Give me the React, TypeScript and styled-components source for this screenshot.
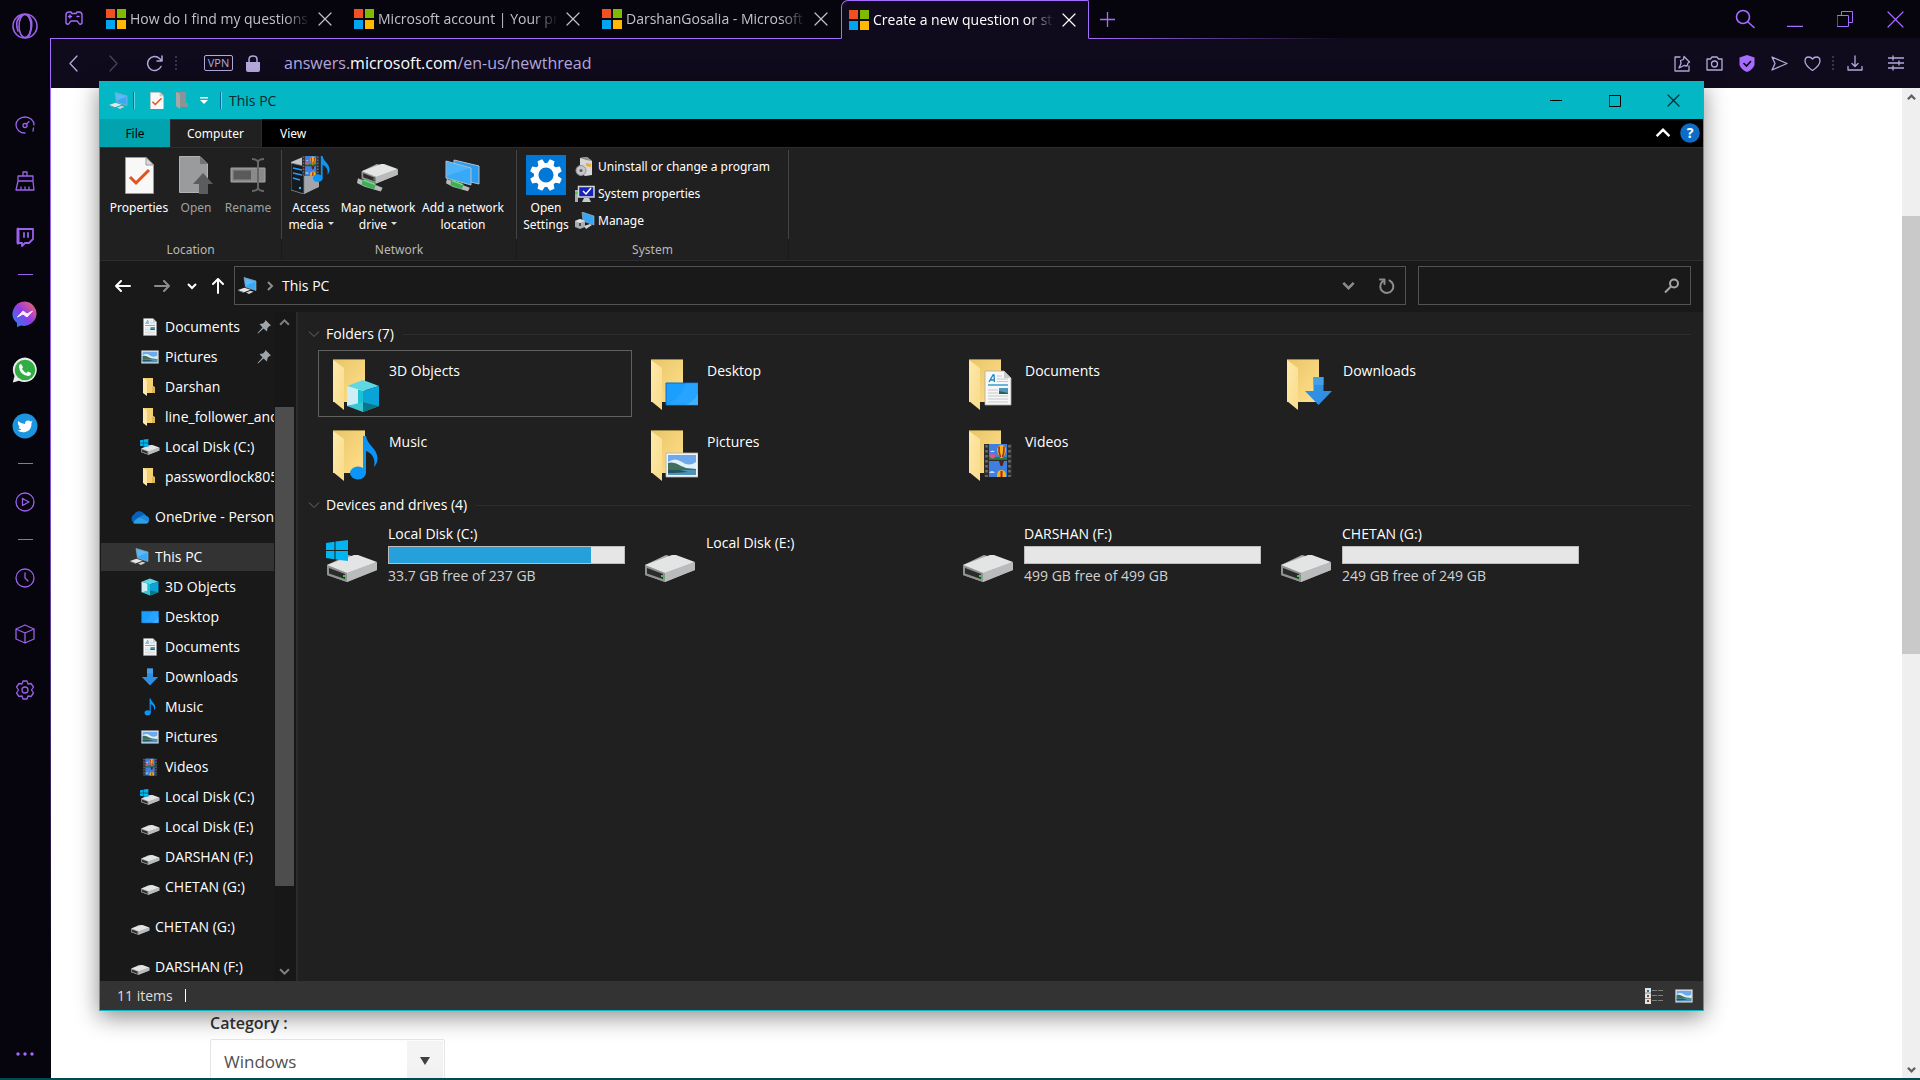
import React from "react";
import styled, { createGlobalStyle, css } from "styled-components";

const GlobalStyle = createGlobalStyle`
  * { box-sizing: border-box; }
  html, body { margin: 0; padding: 0; }
  body {
    background: #004b50;
    font-family: "Open Sans", "Noto Sans", sans-serif;
    font-size: 14px;
    overflow: hidden;
  }
  button, input, select { font: inherit; color: inherit; border: 0; padding: 0; margin: 0; background: none; }
  svg { display: block; flex: none; }
`;

/* ---------- browser ---------- */

const Browser = styled.div`
  position: relative;
  display: flex;
  height: 100vh;
  border-bottom: 2px solid #004b50;
  background: #06040d;
`;

const Sidebar = styled.nav`
  width: 50px;
  flex: none;
  display: flex;
  flex-direction: column;
  align-items: center;
  padding: 12px 0 10px;
  color: #9a61ea;
`;

const SideButton = styled.button<{ $top?: number }>`
  display: grid;
  place-items: center;
  width: 32px;
  height: 28px;
  flex: none;
  margin-top: ${(p) => p.$top ?? 28}px;
`;

const SideRule = styled.hr`
  width: 15px;
  height: 1px;
  flex: none;
  margin: 23px 0 0;
  border: 0;
  background: #9a61ea;
`;

const Spacer = styled.div`
  flex: 1;
`;

const BrowserMain = styled.div`
  flex: 1;
  min-width: 0;
  display: flex;
  flex-direction: column;
`;

const TabBar = styled.header`
  position: relative;
  z-index: 1;
  display: flex;
  height: 38px;
  flex: none;
  color: #a66bff;
`;

const TabMenuCell = styled.div`
  display: grid;
  margin-bottom: -1px;
  border-bottom: 1px solid #a66bff;
`;

const TabMenu = styled.button`
  width: 48px;
  display: grid;
  place-items: center;
`;

const BrowserTab = styled.div<{ $active?: boolean }>`
  width: 248px;
  display: flex;
  align-items: center;
  gap: 4px;
  padding: 0 10px 0 8px;
  color: ${(p) => (p.$active ? "#ffffff" : "#c3c2c6")};
  border-bottom: 1px solid #a66bff;
  margin-bottom: -1px;
  ${(p) =>
    p.$active &&
    css`
      margin-left: -1px;
      background: #0f0b1c;
      border: 1px solid #a66bff;
      border-bottom-color: #0f0b1c;
      border-top-left-radius: 7px;
      border-top-right-radius: 2px;
      padding-left: 7px;
      padding-right: 8px;
    `}
`;

const TabTitle = styled.button`
  flex: 1;
  min-width: 0;
  overflow: hidden;
  white-space: nowrap;
  text-align: left;
  font-size: 14px;
  line-height: 24px;
  mask-image: linear-gradient(to right, #000 86%, transparent 100%);
`;

const TabClose = styled.button`
  width: 22px;
  height: 24px;
  display: grid;
  place-items: center;
`;

const TabRest = styled.div`
  flex: 1;
  display: flex;
  align-items: center;
  padding-left: 11px;
  margin-bottom: -1px;
  border-bottom: 1px solid transparent;
  border-image: linear-gradient(to right, #a66bff 0, #0f0b1c 30%) 1;
`;

const WindowButton = styled.button`
  width: 50px;
  height: 36px;
  display: grid;
  place-items: center;
`;

const PlainButton = styled.button`
  display: grid;
  place-items: center;
`;

const Frame = styled.div`
  flex: 1;
  min-height: 0;
  display: flex;
  flex-direction: column;
  border-left: 1px solid;
  border-image: linear-gradient(to bottom, #a66bff 0, #8a55dd 40%, #06040d 90%) 1;
`;

const Toolbar = styled.div`
  display: flex;
  align-items: center;
  height: 50px;
  flex: none;
  padding: 0 1px 0 5px;
  background: #0f0b1c;
  color: #b5a8dc;
`;

const ToolButton = styled.button<{ $w: number; $dim?: boolean }>`
  width: ${(p) => p.$w}px;
  height: 32px;
  flex: none;
  display: grid;
  place-items: center;
  opacity: ${(p) => (p.$dim ? 0.35 : 1)};
`;

const DotRule = styled.span`
  width: 2px;
  height: 14px;
  flex: none;
  border-left: 2px dotted #3a3452;
`;

const VpnBadge = styled.button`
  width: 29px;
  height: 16px;
  margin: 0 13px 0 24px;
  border: 1px solid #b5a8dc;
  border-radius: 2px;
  font-size: 11px;
  line-height: 14px;
`;

const Address = styled.button`
  flex: 1;
  text-align: left;
  margin-left: 24px;
  font-size: 16px;
  line-height: 24px;
  b { font-weight: 400; color: #ffffff; }
`;

const Page = styled.main`
  flex: 1;
  min-height: 0;
  display: flex;
  background: #ffffff;
`;

const PageBody = styled.form`
  flex: 1;
  min-height: 0;
  overflow: hidden;
  display: flex;
  flex-direction: column;
  justify-content: flex-end;
  align-items: flex-start;
  padding-left: 159px;
`;

const FieldLabel = styled.label`
  color: #333333;
  font-size: 16px;
  line-height: 24px;
  font-weight: 600;
  margin-bottom: 4px;
`;

const SelectBox = styled.div`
  display: grid;
  grid-template-columns: 1fr 36px;
  width: 235px;
  height: 44px;
  flex: none;
  margin-bottom: -5px;
  padding: 1px;
  border: 1px solid #e6e6e6;
  border-radius: 2px;
  color: #505050;
`;

const CategorySelect = styled.select`
  grid-area: 1 / 1 / 2 / 3;
  appearance: none;
  padding-left: 12px;
  font-size: 17px;
`;

const SelectArrow = styled.span`
  grid-area: 1 / 2 / 2 / 3;
  display: grid;
  place-items: center;
  background: linear-gradient(#f4f4f4 0 42%, #efefef);
  pointer-events: none;
`;

const PageScroll = styled.div`
  width: 18px;
  flex: none;
  display: grid;
  grid-template-rows: 18px 110fr 438fr 406fr 18px;
  background: #efefef;
  color: #606060;
`;

const PageThumb = styled.div`
  grid-row: 3;
  background: #c9c9c9;
`;

const LastCell = styled.button`
  grid-row: 5;
  display: grid;
  place-items: center;
`;

/* ---------- explorer ---------- */

const Explorer = styled.section`
  position: absolute;
  z-index: 2;
  left: 99px;
  top: 81px;
  right: 216px;
  bottom: 67px;
  display: flex;
  flex-direction: column;
  border: 1px solid #14b3c0;
  background: #191919;
  color: #ffffff;
  box-shadow: 0 6px 22px rgba(0, 0, 0, 0.45);
`;

const TitleBar = styled.div`
  display: flex;
  align-items: center;
  height: 37px;
  flex: none;
  padding-left: 9px;
  background: #03b7c5;
  color: #08272b;
`;

const TitleSep = styled.span`
  width: 2px;
  height: 17px;
  background: #08689a;
  border-right: 1px solid #5fd6e0;
`;

const QuickButton = styled.button<{ $w: number }>`
  width: ${(p) => p.$w}px;
  height: 28px;
  flex: none;
  display: grid;
  place-items: center;
`;

const WindowTitle = styled.h1`
  flex: 1;
  margin: 0 0 0 7px;
  font-size: 14px;
  font-weight: 400;
`;

const CaptionButton = styled.button`
  width: 59px;
  height: 36px;
  display: grid;
  place-items: center;
`;

const RibbonTabs = styled.div`
  display: flex;
  align-items: stretch;
  height: 28px;
  flex: none;
  padding-right: 2px;
  background: #000000;
  font-family: "Noto Sans", "Open Sans", sans-serif;
  font-size: 12px;
`;

const RibbonTab = styled.button<{ $kind: "file" | "on" | "off" }>`
  padding: 0 18px;
  ${(p) =>
    p.$kind === "file" &&
    css`
      width: 70px;
      background: #00a3ae;
      color: #000000;
    `}
  ${(p) =>
    p.$kind === "on" &&
    css`
      width: 92px;
      background: #202020;
      margin-bottom: -1px;
      padding: 0 18px 2px 16px;
      border: 1px solid #2d2d2d;
      border-bottom: 0;
    `}
`;

const Ribbon = styled.div`
  display: flex;
  height: 114px;
  flex: none;
  padding-top: 2px;
  border-top: 1px solid #2d2d2d;
  border-bottom: 1px solid #2d2d2d;
  background: #202020;
  font-family: "Noto Sans", "Open Sans", sans-serif;
  font-size: 12px;
  line-height: 17px;
`;

const RibbonGroup = styled.section<{ $w: number }>`
  width: ${(p) => p.$w}px;
  display: flex;
  flex-direction: column;
  border-right: 1px solid;
  border-image: linear-gradient(to bottom, #434343 88px, #1a1a1a 88px) 1;
`;

const GroupBody = styled.div<{ $pad: number }>`
  flex: 1;
  display: flex;
  padding-left: ${(p) => p.$pad}px;
`;

const GroupName = styled.h2`
  margin: 0;
  padding-bottom: 1px;
  font-size: 12px;
  line-height: 18px;
  font-weight: 400;
  text-align: center;
  color: #b8b8b8;
`;

const BigButton = styled.button<{ $w: number; $off?: boolean }>`
  width: ${(p) => p.$w}px;
  display: flex;
  flex-direction: column;
  align-items: center;
  padding-top: 4px;
  color: ${(p) => (p.$off ? "#a0a0a0" : "#ffffff")};
  line-height: 17px;
  white-space: nowrap;
`;

const BigIcon = styled.span`
  display: grid;
  place-items: center;
  height: 42px;
  margin-bottom: 3px;
`;

const SmallList = styled.div`
  display: flex;
  flex-direction: column;
  padding: 3px 0 0 4px;
`;

const SmallButton = styled.button`
  display: flex;
  align-items: center;
  gap: 3px;
  height: 27px;
  white-space: nowrap;
`;

const Caret = styled.i`
  display: inline-block;
  margin-left: 4px;
  vertical-align: 4px;
  border: 3px solid transparent;
  border-top-color: #e0e0e0;
  border-bottom: 0;
`;

const NavBar = styled.div`
  display: flex;
  align-items: center;
  height: 51px;
  flex: none;
  padding: 0 12px 2px 3px;
`;

const NavButton = styled.button<{ $w: number; $dim?: boolean }>`
  width: ${(p) => p.$w}px;
  height: 32px;
  flex: none;
  display: grid;
  place-items: center;
  opacity: ${(p) => (p.$dim ? 0.5 : 1)};
`;

const PathBox = styled.div`
  flex: 1;
  display: flex;
  align-items: center;
  height: 39px;
  margin-left: 2px;
  padding-left: 3px;
  border: 1px solid #535353;
  color: #ffffff;
`;

const PathText = styled.button`
  flex: 1;
  text-align: left;
`;

const SearchBox = styled.label`
  width: 273px;
  height: 39px;
  margin-left: 12px;
  display: flex;
  align-items: center;
  padding: 0 10px;
  border: 1px solid #535353;
`;

const SearchInput = styled.input`
  flex: 1;
  min-width: 0;
  height: 30px;
  outline: 0;
`;

const Body = styled.div`
  flex: 1;
  min-height: 0;
  display: flex;
`;

const Tree = styled.nav`
  width: 174px;
  flex: none;
  overflow: hidden;
  display: flex;
  flex-direction: column;
`;

const TreeRow = styled.button<{ $root?: boolean; $on?: boolean; $end?: boolean }>`
  display: flex;
  align-items: center;
  flex: none;
  height: ${(p) => (p.$on ? 28 : 30)}px;
  margin: ${(p) => (p.$on ? 1 : 0)}px 0 ${(p) => (p.$end ? 10 : p.$on ? 1 : 0)}px 1px;
  padding-left: ${(p) => (p.$root ? 29 : 39)}px;
  gap: 5px;
  white-space: nowrap;
  background: ${(p) => (p.$on ? "#333333" : "transparent")};
`;

const TreeIcon = styled.span`
  width: 20px;
  flex: none;
  display: grid;
  place-items: center;
`;

const TreeLabel = styled.span`
  flex: 1;
  min-width: 0;
  overflow: hidden;
  text-align: left;
  line-height: 24px;
`;

const PinSlot = styled.span`
  width: 17px;
  flex: none;
`;

const TreeScroll = styled.div`
  width: 22px;
  flex: none;
  display: grid;
  grid-template-rows: 20px 75fr 479fr 75fr 20px;
  padding: 0 2px 0 1px;
  background: #171717;
  color: #808080;
`;

const TreeThumb = styled.div`
  grid-row: 3;
  background: #4d4d4d;
`;

const Content = styled.div`
  flex: 1;
  min-width: 0;
  border-left: 2px solid #2b2b2b;
  background: #202020;
  padding: 10px 12px 0 10px;
`;

const SectionHead = styled.div`
  display: flex;
  align-items: center;
  gap: 9px;
  height: 24px;
  &::after {
    content: "";
    flex: 1;
    height: 1px;
    background: #2d2d2d;
  }
`;

const SectionButton = styled.button`
  display: flex;
  align-items: center;
  gap: 6px;
  line-height: 24px;
`;

const Tiles = styled.div`
  display: grid;
  grid-template-columns: repeat(auto-fill, 314px);
  gap: 4px;
  padding: 4px 0 5px 10px;
`;

const Tile = styled.button<{ $focus?: boolean }>`
  display: flex;
  height: 67px;
  padding: 8px 0 0 7px;
  gap: 9px;
  text-align: left;
  border: 1px solid ${(p) => (p.$focus ? "#606060" : "transparent")};
`;

const TileIcon = styled.span`
  width: 54px;
  display: grid;
  justify-items: end;
  align-items: start;
`;

const TileLabel = styled.span`
  line-height: 24px;
`;

const DriveTile = styled.button<{ $bare?: boolean }>`
  display: flex;
  height: 67px;
  padding: ${(p) => (p.$bare ? 10 : 1)}px 0 0 8px;
  gap: 9px;
  text-align: left;
`;

const DriveIconSlot = styled.span<{ $bare?: boolean }>`
  width: 53px;
  padding-top: ${(p) => (p.$bare ? 9 : 18)}px;
`;

const DriveText = styled.span`
  display: flex;
  flex-direction: column;
  line-height: 24px;
`;

const Meter = styled.span`
  width: 237px;
  height: 18px;
  border: 1px solid #bcbcbc;
  background: #e6e6e6;
`;

const MeterFill = styled.span`
  display: block;
  height: 100%;
  background: #26a0da;
`;

const DriveFree = styled.span`
  color: #d2d2d2;
`;

const StatusBar = styled.footer`
  display: flex;
  align-items: center;
  height: 29px;
  flex: none;
  gap: 12px;
  padding: 0 10px 0 17px;
  background: #333333;
  color: #dedede;
`;

const StatusRule = styled.span`
  width: 1px;
  height: 13px;
  background: #ffffff;
  margin-right: auto;
`;

/* ---------- drawings ---------- */

const Line = ({ w = 20, h = w, box, sw = 1.3, children }: any) => (
  <svg width={w} height={h} viewBox={box ?? `0 0 ${w} ${h}`} fill="none" stroke="currentColor" strokeWidth={sw} strokeLinecap="round" strokeLinejoin="round">
    {children}
  </svg>
);

const Cross = ({ s = 14, sw = 1.2 }: { s?: number; sw?: number }) => (
  <Line w={s} sw={sw}><path d={`M1 1L${s - 1} ${s - 1}M${s - 1} 1L1 ${s - 1}`} /></Line>
);

const Chevron = ({ dir, w = 10, sw = 1.5 }: { dir: "up" | "down" | "left" | "right"; w?: number; sw?: number }) => {
  const turn = { down: 0, left: 90, up: 180, right: 270 }[dir];
  return (
    <svg width={w} height={w} viewBox="0 0 10 10" fill="none" stroke="currentColor" strokeWidth={sw}>
      <path d="M1 3L5 7L9 3" transform={`rotate(${turn} 5 5)`} />
    </svg>
  );
};

const MsLogo = () => (
  <svg width="20" height="20" viewBox="0 0 20 20">
    <path fill="#f25022" d="M0 0h9v9H0z" /><path fill="#7fba00" d="M11 0h9v9h-9z" />
    <path fill="#00a4ef" d="M0 11h9v9H0z" /><path fill="#ffb900" d="M11 11h9v9h-9z" />
  </svg>
);

const PcIcon = () => (
  <svg width="20" height="18" viewBox="0 0 20 18">
    <path d="M6 0.500L18 4V13.500L7.500 10Z" fill="#3aa9f5" stroke="#a9b8c2" strokeWidth=".6" />
    <path d="M7 1.500L17.500 4.500L8 8.500Z" fill="#7cccff" opacity=".5" />
    <path d="M0 13L6.500 10.800L12.500 12.800L6 15.200Z" fill="#e4e6e8" /><path d="M0 13L6 15.200V16L0 13.800Z" fill="#8e9499" />
    <path d="M8 15.500L12.500 13.800L15.500 14.800L11 17Z" fill="#cfd3d6" />
  </svg>
);

const Cube = () => (
  <g>
    <path d="M16 0L32 6L16 11L0 6Z" fill="#5fd8e6" /><path d="M0 6L16 11V24L0 26Z" fill="#cdeef4" />
    <path d="M16 11L32 6V26L16 24Z" fill="#0aa3d8" /><path d="M11 9.500L16 11V24L11 24.500Z" fill="#19c2d4" />
    <path d="M0 26L16 22L32 26L16 32Z" fill="#3cc6d3" /><path d="M16 22L32 26L16 32Z" fill="#05788a" />
  </g>
);
const Screen = () => (
  <g>
    <path d="M0 0H32V22H0Z" fill="#1a9fff" stroke="#0b6fc0" strokeWidth="1" />
    <path d="M0 22C10 18 18 8 20 0H32V22Z" fill="#2fa8ff" opacity=".6" /><path d="M20 22C27 18 31 14 32 10V22Z" fill="#4fb6ff" opacity=".7" />
  </g>
);
const Doc = () => (
  <g>
    <path d="M0 0H19L26 7V34H0Z" fill="#f7f7f7" stroke="#a9a9a9" strokeWidth=".8" /><path d="M19 0V7H26Z" fill="#c9c9c9" />
    <path d="M4 11L8 4H9L9.500 11M5.500 9H9" stroke="#1a86c9" strokeWidth="1.300" fill="none" />
    <path d="M12 5H17M12 8H23M12 10.500H23M3 19H13M3 22H13M3 25H23M3 28H23M3 31H23" stroke="#c3c7ca" strokeWidth="1" />
    <path d="M3 14H23" stroke="#3a9fd0" strokeWidth="1.500" /><path d="M14 17H23V23H14Z" fill="#4a9ac0" /><path d="M14 20L23 22V23H14Z" fill="#2d5f52" />
  </g>
);
const Arrow = () => (
  <g><path d="M8.500 0H18.500V14H27L13.500 28L0 14H8.500Z" fill="#2f8fe3" /><path d="M8.500 0H18.500V8H8.500Z" fill="#459fe6" /></g>
);
const Note = () => (
  <g fill="#0a95f7">
    <ellipse cx="8" cy="37" rx="8" ry="6.500" /><path d="M13 0H16C17 9 27 12 27.500 22C27.500 26 26 29 24 31C26 23 22 17 16 15V37H13Z" />
  </g>
);
const Photo = () => (
  <g>
    <path d="M0 0H32V24H0Z" fill="#f3f3f3" stroke="#b0b0b0" strokeWidth=".8" /><path d="M2 2H30V22H2Z" fill="#6ea9ee" />
    <path d="M2 9Q9 4 16 9T30 9V17H2Z" fill="#dff1fa" /><path d="M2 10C8 8 12 12 20 15L30 16V17H2Z" fill="#3f6f5c" />
    <path d="M2 17H30V22H2Z" fill="#4b93ba" /><path d="M2 17H14L22 19L8 20H2Z" fill="#285260" />
  </g>
);
const Film = () => (
  <g>
    <path d="M0 0H28V33H0Z" fill="#2d2d2d" /><path d="M5 0H23V15.500H5Z" fill="#3f7fe0" /><path d="M5 17H23V33H5Z" fill="#3f7fe0" />
    <path d="M5 13H23V15.500H5Z" fill="#26802f" /><path d="M13 6A4.500 5 0 0 1 22 6Q22 10 18.500 14H16.500Q13 10 13 6Z" fill="#f2b21c" />
    <path d="M15 2.500Q14.500 8 16.500 13M20 2.500Q20.500 8 18.500 13" fill="none" stroke="#a8201b" strokeWidth="1.500" />
    <circle cx="8.500" cy="12" r="2.500" fill="#e4508a" /><path d="M15 17H20L18.500 22H16.500Z" fill="#5b1d1a" />
    <path d="M13 33Q12.500 26 17.500 26T22 33Z" fill="#f2b21c" /><path d="M16.500 27H18.500V33H16.500Z" fill="#a8201b" />
    <path d="M6 8Q8 5 11 8ZM5 29Q8 25 11 29Z" fill="#bfe0ff" />
    <path d="M2.500 1V33M25.500 1V33" stroke="#6c6c6c" strokeWidth="2.500" strokeDasharray="2.500 2.500" />
  </g>
);

type Kind = "cube" | "screen" | "doc" | "arrow" | "note" | "photo" | "film";
const overlays: Record<Kind, { el: React.ReactNode; at: [number, number]; size: [number, number] }> = {
  cube: { el: <Cube />, at: [14, 21], size: [32, 32] },
  screen: { el: <Screen />, at: [15, 24], size: [32, 22] },
  doc: { el: <Doc />, at: [16, 12], size: [26, 34] },
  arrow: { el: <Arrow />, at: [18, 18], size: [27, 28] },
  note: { el: <Note />, at: [17, 6], size: [28, 44] },
  photo: { el: <Photo />, at: [15, 23], size: [32, 24] },
  film: { el: <Film />, at: [15, 14], size: [28, 33] },
};

const BigFolder = ({ kind }: { kind: Kind }) => (
  <svg width="48" height="54" viewBox="-1 0 48 54">
    <defs>
      <linearGradient id="back" x1="0" x2="1" y1="0" y2="1"><stop offset="0" stopColor="#e9c569" /><stop offset="1" stopColor="#ffe08a" /></linearGradient>
      <linearGradient id="flap" x1="0" x2="1" y1="0" y2="1"><stop offset="0" stopColor="#ffe9ac" /><stop offset="1" stopColor="#f8dc8b" /></linearGradient>
    </defs>
    <path d="M0 0H32V43H0Z" fill="url(#back)" /><path d="M0 .5H32" stroke="#9d8546" />
    <path d="M0 1L11 9V51L0 42Z" fill="url(#flap)" />
    <g transform={`translate(${overlays[kind].at.join(" ")})`}>{overlays[kind].el}</g>
  </svg>
);

const Small = ({ kind }: { kind: Kind }) => {
  const [w, h] = overlays[kind].size;
  return <svg width="18" height="18" viewBox={`-1 -1 ${w + 2} ${h + 2}`}>{overlays[kind].el}</svg>;
};

const SmallFolder = () => (
  <svg width="18" height="18" viewBox="0 0 18 18">
    <path d="M2 0H12V8L14 9V15H2Z" fill="#f3cf74" /><path d="M11 9H14V15H11Z" fill="#e0b64f" /><path d="M2 0L6 2.500V18L2 15Z" fill="#ffe9ac" />
  </svg>
);

const WinFlag = () => (
  <g fill="#00b5f0"><path d="M0 3L8.500 1.700V10H0ZM9.500 1.500L22 0V10H9.500ZM0 11H8.500V19.300L0 18ZM9.500 11H22V21L9.500 19.500Z" /></g>
);
const DriveBody = () => (
  <g>
    <path d="M1 10L22 0L51 8L51 15L21 27L1 20Z" fill="#a9abac" /><path d="M1 10L28 0H32L51 7L21 18Z" fill="#e3e4e4" />
    <path d="M1 10L21 18V27L1 20Z" fill="#8f9293" /><path d="M3 13L19 19V24L3 18.500Z" fill="#2b2b2b" />
    <path d="M21 18L51 7V15L21 27Z" fill="#b9bbbc" /><path d="M17 20H19V22H17Z" fill="#33d63a" />
  </g>
);
const BigDrive = ({ win }: { win?: boolean }) => (
  <svg width="52" height="43" viewBox="0 0 52 43">
    <g transform="translate(0 15)"><DriveBody /></g>{win && <WinFlag />}
  </svg>
);
const SmallDrive = ({ win }: { win?: boolean }) => (
  <svg width="20" height="18" viewBox="0 0 20 18">
    <g transform="translate(1 7) scale(.36)"><DriveBody /></g>{win && <g transform="translate(0 1) scale(.38)"><WinFlag /></g>}
  </svg>
);
const Cloud = () => (
  <svg width="20" height="14" viewBox="0 0 20 14">
    <path d="M5 13A4.500 4.500 0 0 1 4 4.600A6 6 0 0 1 14 3.500Q16 4 16.500 7L10 13Z" fill="#0a5fb8" />
    <path d="M5 13.500Q3 11 6 9L12 5.500Q14 4 16 5.800A4 4 0 0 1 16.500 13.500Z" fill="#1f86d6" />
    <path d="M3 13Q7 8 10 7.500L18.500 12Q17.500 13.600 15 13.600H5Q4 13.600 3 13Z" fill="#2aa0e6" />
  </svg>
);
const Pin = () => (
  <svg width="14" height="14" viewBox="0 0 14 14" fill="#9ea5ab">
    <path d="M8.500 0L14 5.500L12.500 6L10.500 8L10 11.500L6.500 8.500L1 13.500L.5 13L5.500 7.500L2.500 4L6 3.500L8 1.500Z" />
  </svg>
);
const CheckPage = ({ w = 14 }: { w?: number }) => (
  <svg width={w} height={(w * 37) / 29} viewBox="0 0 29 37">
    <path d="M.5.5H21L28.500 8V36.500H.5Z" fill="#f8f8f8" stroke="#9a9a9a" /><path d="M21 .5V8H28.500Z" fill="#dadada" stroke="#9a9a9a" />
    <path d="M5 20L11 26L24 13" fill="none" stroke="#e2521c" strokeWidth="3" />
  </svg>
);
const OpenIcon = () => (
  <svg width="34" height="39" viewBox="0 0 34 39">
    <path d="M.5.5H21L28.500 8V36.500H.5Z" fill="#999b9d" stroke="#b3b3b3" /><path d="M21 .5V8H28.500Z" fill="#737373" />
    <path d="M24 17L34 28H29V38H20V28H14Z" fill="#5c5c5c" />
  </svg>
);
const RenameIcon = () => (
  <svg width="36" height="34" viewBox="0 0 36 34" fill="none">
    <path d="M1 10H35V24H1Z" fill="#8a8a8a" stroke="#a5a5a5" /><path d="M3.500 12.500H21V21.500H3.500Z" fill="#5a5a5a" />
    <path d="M28 3V31M22 1Q27 1 28 4Q29 1 34 1M22 33Q27 33 28 30Q29 33 34 33" stroke="#666666" strokeWidth="2" />
  </svg>
);
const MediaIcon = () => (
  <svg width="40" height="38" viewBox="0 0 40 38">
    <path d="M0 6L12 1L28 6V30L13 38L0 34Z" fill="#c4c7ca" /><path d="M0 7L13 10V38L0 34Z" fill="#16191d" /><path d="M13 10L28 6V31L13 38Z" fill="#a2a6aa" />
    <path d="M0 7L13 10V38L0 34Z" fill="none" stroke="#7e8388" strokeWidth=".8" />
    <path d="M2 12L11 14M2 17L11 19M2 22L9 24" stroke="#2f9bf0" strokeWidth="1.500" /><circle cx="9" cy="32" r="1.200" fill="#3cb8ff" />
    <g transform="translate(11 0) scale(.62 .6)"><Film /></g><g transform="translate(22 0) scale(.6)"><Note /></g>
  </svg>
);
const Plug = () => (
  <g><path d="M1 17L9 20L27 27L25 31L8 26L0 22Z" fill="#b7b9ba" /><path d="M6 18L20 23L18 29L5 24Z" fill="#3fae56" /><path d="M7 19L19 23.500" stroke="#7ee08f" strokeWidth="1.500" /></g>
);
const MapDrive = () => (
  <svg width="42" height="34" viewBox="0 0 42 34"><g transform="translate(4 6) scale(.72)"><DriveBody /></g><g transform="translate(0 4) scale(.95)"><Plug /></g></svg>
);
const NetPlace = () => (
  <svg width="36" height="34" viewBox="0 0 36 34">
    <path d="M9 2L34 8V26L9 20Z" fill="#2b9df0" stroke="#b5c0c8" /><path d="M1 3L26 10V27L1 20Z" fill="#37a9f7" stroke="#b5c0c8" /><path d="M2 4L25 10L2 18Z" fill="#63c0ff" opacity=".5" />
    <g transform="translate(1 6) scale(.88)"><Plug /></g>
  </svg>
);
const SettingsTile = () => (
  <svg width="40" height="40" viewBox="0 0 40 40">
    <path d="M0 0H40V40H0Z" fill="#0078d7" />
    <g fill="#ffffff">{[0, 45, 90, 135, 180, 225, 270, 315].map((a) => <path key={a} d="M17.500 4H22.500L24 11H16Z" transform={`rotate(${a + 22.5} 20 20)`} />)}</g>
    <circle cx="20" cy="20" r="9.800" fill="none" stroke="#ffffff" strokeWidth="4.500" />
  </svg>
);
const UninstallIcon = () => (
  <svg width="20" height="20" viewBox="0 0 20 20"><path d="M5 1L12 0L17 4V18L10 19L5 15Z" fill="#d8d8d6" /><path d="M5 1L11 3L17 4L12 0Z" fill="#8e8e8c" /><path d="M11 6L16 7V10L11 9Z" fill="#e8ab3c" /><circle cx="6" cy="13.500" r="5" fill="#c4c6c8" stroke="#8f9294" /><circle cx="6" cy="13.500" r="1.500" fill="#565a5c" /></svg>
);
const SysPropIcon = () => (
  <svg width="20" height="18" viewBox="0 0 20 18"><path d="M0 5H3V17H0Z" fill="#a8acae" /><path d="M0 7H3V9H0Z" fill="#36d43b" /><path d="M3.500 1.500H19V12H3.500Z" fill="#1622b8" stroke="#d4d8da" strokeWidth="1.500" /><path d="M8 6L11 9L16 3" fill="none" stroke="#ffffff" strokeWidth="1.500" /><path d="M9 13H14L16 17H7Z" fill="#c7cbcd" /></svg>
);
const ManageIcon = () => (
  <svg width="20" height="18" viewBox="0 0 20 18"><path d="M7 0L19 4V13L8 9Z" fill="#35a7f4" stroke="#a9b8c2" strokeWidth=".6" /><path d="M0 9L5 7L10 9V15L5 17L0 15Z" fill="#a9adb0" /><path d="M0 9L5 7L10 9L5 11Z" fill="#dcdfe0" /><path d="M9 14L15 12L17 13L11 17Z" fill="#cfd3d6" /><path d="M4 11H6V14H4Z" fill="#4d5154" /></svg>
);
const DetailsIcon = () => (
  <svg width="18" height="16" viewBox="0 0 18 16"><path d="M0 0H6V16H0Z" fill="#e2e2e2" /><path d="M2 2H4V4H2Z" fill="#2a7a8c" /><path d="M2 7H4V9H2Z" fill="#5a6a3c" /><path d="M2 12H4V14H2Z" fill="#a23c20" /><path d="M0 5H6M0 10.500H6" stroke="#8b8b8b" /><path d="M7 2.500H12M13 2.500H18M7 7.500H12M13 7.500H18M7 12.500H12M13 12.500H18" stroke="#808080" /></svg>
);

/* ---------- data ---------- */

type Row = { label: string; icon: React.ReactNode; root?: boolean; on?: boolean; end?: boolean; pin?: boolean };
const rows: Row[] = [
  { label: "Documents", icon: <Small kind="doc" />, pin: true },
  { label: "Pictures", icon: <Small kind="photo" />, pin: true },
  { label: "Darshan", icon: <SmallFolder /> },
  { label: "line_follower_and", icon: <SmallFolder /> },
  { label: "Local Disk (C:)", icon: <SmallDrive win /> },
  { label: "passwordlock805", icon: <SmallFolder />, end: true },
  { label: "OneDrive - Person", icon: <Cloud />, root: true, end: true },
  { label: "This PC", icon: <PcIcon />, root: true, on: true },
  { label: "3D Objects", icon: <Small kind="cube" /> },
  { label: "Desktop", icon: <Small kind="screen" /> },
  { label: "Documents", icon: <Small kind="doc" /> },
  { label: "Downloads", icon: <Small kind="arrow" /> },
  { label: "Music", icon: <Small kind="note" /> },
  { label: "Pictures", icon: <Small kind="photo" /> },
  { label: "Videos", icon: <Small kind="film" /> },
  { label: "Local Disk (C:)", icon: <SmallDrive win /> },
  { label: "Local Disk (E:)", icon: <SmallDrive /> },
  { label: "DARSHAN (F:)", icon: <SmallDrive /> },
  { label: "CHETAN (G:)", icon: <SmallDrive />, end: true },
  { label: "CHETAN (G:)", icon: <SmallDrive />, root: true, end: true },
  { label: "DARSHAN (F:)", icon: <SmallDrive />, root: true },
];

const folders: { label: string; kind: Kind }[] = [
  { label: "3D Objects", kind: "cube" },
  { label: "Desktop", kind: "screen" },
  { label: "Documents", kind: "doc" },
  { label: "Downloads", kind: "arrow" },
  { label: "Music", kind: "note" },
  { label: "Pictures", kind: "photo" },
  { label: "Videos", kind: "film" },
];

const drives = [
  { label: "Local Disk (C:)", free: 33.7, total: 237, win: true },
  { label: "Local Disk (E:)" },
  { label: "DARSHAN (F:)", free: 499, total: 499 },
  { label: "CHETAN (G:)", free: 249, total: 249 },
];

const tabs = [
  "How do I find my questions",
  "Microsoft account | Your pr",
  "DarshanGosalia - Microsoft",
  "Create a new question or st",
];

/* ---------- parts ---------- */

const SideNav = () => (
  <Sidebar aria-label="Browser sidebar">
    <SideButton $top={0} aria-label="Opera">
      <Line w={26} sw={1.6}><circle cx="13" cy="13" r="12" /><ellipse cx="13" cy="13" rx="6" ry="11.500" /><path d="M10 2Q2 7 6 18M16 2Q23 8 17 23" /></Line>
    </SideButton>
    <SideButton $top={71} aria-label="GX Control">
      <Line w={20} sw={1.3}><path d="M10 18A9 8 0 1 1 19 10M18.500 13L18 16" /><circle cx="10" cy="10.500" r="2" /><path d="M11.500 9L14 6.500" /></Line>
    </SideButton>
    <SideButton aria-label="Cleaner">
      <Line w={20} sw={1.3}><path d="M8 5V1H12V5M3 5H18V10H3ZM3 10L1 19H19L18 10M6 19V16M10 19V16M14 19V16" /></Line>
    </SideButton>
    <SideButton aria-label="Twitch">
      <Line w={20} sw={1.8}><path d="M3 2H18V12L14 16H10L7 19V16H3ZM9 6V10M13 6V10" /><path d="M3 2V16" strokeWidth="3" /></Line>
    </SideButton>
    <SideRule />
    <SideButton $top={25} aria-label="Messenger">
      <svg width="26" height="26" viewBox="0 0 26 26">
        <defs><linearGradient id="msg" x1="0" y1="1" x2="1" y2="0"><stop offset="0" stopColor="#1689f5" /><stop offset=".5" stopColor="#9339e8" /><stop offset="1" stopColor="#ff6a5c" /></linearGradient></defs>
        <path d="M13 .5A12.500 12.200 0 1 1 9 24.500L5 26V22A12.500 12.200 0 0 1 13 .5Z" fill="url(#msg)" /><path d="M5.500 16L11 10L15 13L20.500 10L15 16L11 13Z" fill="#f2f2f2" stroke="#f2f2f2" />
      </svg>
    </SideButton>
    <SideButton aria-label="WhatsApp">
      <svg width="26" height="26" viewBox="0 0 26 26"><path d="M13 .5A12.300 12.300 0 1 1 7 23.800L.8 25.500L2.500 19A12.300 12.300 0 0 1 13 .5Z" fill="#ececec" /><circle cx="13" cy="13" r="10.300" fill="#31ae43" /><path d="M9 7L11 10L10 12Q12 15 14.500 16L16 14.500L19 16Q19 19 16 19Q8 18 7 10Q7 7 9 7Z" fill="#ffffff" /></svg>
    </SideButton>
    <SideButton aria-label="Twitter">
      <svg width="26" height="26" viewBox="0 0 26 26"><circle cx="13" cy="13" r="12.500" fill="#1b95e0" /><path d="M6 8Q9 11 13 11Q13 7.500 16 7.500Q17.500 7.500 18.500 8.500L20.500 8L19.500 10Q20 17 13.500 19Q9 20 5.500 17.500Q8 17.500 9.500 16.500Q7 16 6.500 14H8Q5.500 12 6 8Z" fill="#ffffff" /></svg>
    </SideButton>
    <SideRule />
    <SideButton $top={24} aria-label="Player"><Line w={20}><circle cx="10" cy="10" r="9" /><path d="M7.500 6.500L14 10L7.500 13.500Z" /></Line></SideButton>
    <SideRule />
    <SideButton $top={24} aria-label="History"><Line w={20}><circle cx="10" cy="10" r="9" /><path d="M10 5V10L13 13" /></Line></SideButton>
    <SideButton aria-label="Extensions"><Line w={20}><path d="M10 1L19 5V15L10 19L1 15V5ZM1 5L10 9L19 5M10 9V19" /></Line></SideButton>
    <SideButton aria-label="Settings">
      <Line w={20}><path d="M8 1H12L13 4L16 3.500L18.500 7L16.500 10L18.500 13L16 16.500L13 16L12 19H8L7 16L4 16.500L1.500 13L3.500 10L1.500 7L4 3.500L7 4Z" /><circle cx="10" cy="10" r="3" /></Line>
    </SideButton>
    <Spacer />
    <SideButton aria-label="More"><svg width="20" height="4" fill="#a66bff"><circle cx="3" cy="2" r="1.700" /><circle cx="10" cy="2" r="1.700" /><circle cx="17" cy="2" r="1.700" /></svg></SideButton>
  </Sidebar>
);

const BrowserTop = () => (
  <TabBar>
    <TabMenuCell>
      <TabMenu aria-label="GX Corner">
        <Line w={18} h={16} sw={1.4}><path d="M4 1H6L7 2.500H11L12 1H14Q17 1 17 4V12Q15 15 13 11L12 10H6L5 11Q3 15 1 12V4Q1 1 4 1ZM5 4V7M3.500 5.500H6.500M12 5.500H14" /></Line>
      </TabMenu>
    </TabMenuCell>
    {tabs.map((t, i) => (
      <BrowserTab key={t} $active={i === 3}>
        <MsLogo />
        <TabTitle>{t}</TabTitle>
        <TabClose aria-label="Close tab"><Cross s={14} /></TabClose>
      </BrowserTab>
    ))}
    <TabRest>
      <PlainButton aria-label="New tab"><Line w={15}><path d="M7.500 0V15M0 7.500H15" /></Line></PlainButton>
      <Spacer />
      <WindowButton aria-label="Search tabs"><Line w={20} sw={1.6}><circle cx="8" cy="8" r="6.500" /><path d="M13 13L19 18.500" /></Line></WindowButton>
      <WindowButton aria-label="Minimize"><Line w={16}><path d="M0 15.500H16" /></Line></WindowButton>
      <WindowButton aria-label="Restore"><Line w={16} sw={1}><path d="M.5 4.500H11.500V15.500H.5ZM4.500 4.500V.5H15.500V11.500H11.500" /></Line></WindowButton>
      <WindowButton aria-label="Close"><Cross s={17} /></WindowButton>
    </TabRest>
  </TabBar>
);

const BrowserToolbar = () => (
  <Toolbar>
    <ToolButton $w={34} aria-label="Back"><Line w={9} h={17}><path d="M8 1L1 8.500L8 16" /></Line></ToolButton>
    <ToolButton $w={46} $dim aria-label="Forward"><Line w={9} h={17}><path d="M1 1L8 8.500L1 16" /></Line></ToolButton>
    <ToolButton $w={36} aria-label="Reload"><Line w={17} sw={1.5}><path d="M15 11.500A7 7 0 1 1 13.500 3.500L16 6M16 1V6H11" /></Line></ToolButton>
    <ToolButton $w={8} aria-hidden="true"><DotRule /></ToolButton>
    <VpnBadge>VPN</VpnBadge>
    <svg width="14" height="17" viewBox="0 0 14 17"><path d="M3 8V4.500Q3 1 7 1T11 4.500V8" fill="none" stroke="currentColor" strokeWidth="1.500" /><path d="M0 7H14V15Q14 17 12 17H2Q0 17 0 15Z" fill="currentColor" /></svg>
    <Address aria-label="Address">answers.<b>microsoft.com</b>/en-us/newthread</Address>
    <ToolButton $w={32} aria-label="Pin page"><Line w={17}><path d="M6 2H1V16H15V11M10 1.500L15.500 7L14 8L13 11L10 10.500L5 13L7 8.500L6.500 5.500L9.500 4.500Z" /></Line></ToolButton>
    <ToolButton $w={32} aria-label="Snapshot"><Line w={17} h={15}><path d="M1 3H4.500L6 1H11L12.500 3H16V14H1Z" /><circle cx="8.500" cy="8" r="3" /></Line></ToolButton>
    <ToolButton $w={33} aria-label="Blocker"><svg width="16" height="17" viewBox="0 0 16 17"><path d="M8 0L15.500 2.500V10Q14 14.500 8 17Q2 14.500.5 10V2.500Z" fill="#a66bff" /><path d="M4.500 8L7.500 11L12 6" fill="none" stroke="#0f0b1c" strokeWidth="1.700" /></svg></ToolButton>
    <ToolButton $w={33} aria-label="Send"><Line w={17} h={15}><path d="M1 1L16 7.500L1 14L4 7.500Z" /></Line></ToolButton>
    <ToolButton $w={32} aria-label="Bookmark"><Line w={17} h={15}><path d="M8.500 14.500Q1 9.500 1 5Q1 1 4.500 1Q7 1 8.500 3Q10 1 12.500 1Q16 1 16 5Q16 9.500 8.500 14.500Z" /></Line></ToolButton>
    <ToolButton $w={9} aria-hidden="true"><DotRule /></ToolButton>
    <ToolButton $w={36} aria-label="Downloads"><Line w={16}><path d="M8 1V11M5 8.500L8 11.500L11 8.500M1 11.500V15H15V11.500" /></Line></ToolButton>
    <ToolButton $w={46} aria-label="Easy setup"><Line w={16}><path d="M0 3H16M0 8H16M0 13H16M5 1V5M11 6V10M5 11V15" /></Line></ToolButton>
  </Toolbar>
);

const RibbonBar = () => (
  <Ribbon>
    <RibbonGroup $w={182}>
      <GroupBody $pad={5}>
        <BigButton $w={68}><BigIcon><CheckPage w={29} /></BigIcon>Properties</BigButton>
        <BigButton $w={46} $off><BigIcon><OpenIcon /></BigIcon>Open</BigButton>
        <BigButton $w={58} $off><BigIcon><RenameIcon /></BigIcon>Rename</BigButton>
      </GroupBody>
      <GroupName>Location</GroupName>
    </RibbonGroup>
    <RibbonGroup $w={235}>
      <GroupBody $pad={2}>
        <BigButton $w={54}><BigIcon><MediaIcon /></BigIcon>Access<span>media<Caret /></span></BigButton>
        <BigButton $w={80}><BigIcon><MapDrive /></BigIcon>Map network<span>drive<Caret /></span></BigButton>
        <BigButton $w={90}><BigIcon><NetPlace /></BigIcon>Add a network<span>location</span></BigButton>
      </GroupBody>
      <GroupName>Network</GroupName>
    </RibbonGroup>
    <RibbonGroup $w={272}>
      <GroupBody $pad={4}>
        <BigButton $w={50}><BigIcon><SettingsTile /></BigIcon>Open<span>Settings</span></BigButton>
        <SmallList>
          <SmallButton><UninstallIcon />Uninstall or change a program</SmallButton>
          <SmallButton><SysPropIcon />System properties</SmallButton>
          <SmallButton><ManageIcon />Manage</SmallButton>
        </SmallList>
      </GroupBody>
      <GroupName>System</GroupName>
    </RibbonGroup>
  </Ribbon>
);

const ExplorerWindow = () => (
  <Explorer aria-label="This PC">
    <TitleBar>
      <PcIcon />
      <QuickButton $w={9} aria-hidden="true"><TitleSep /></QuickButton>
      <QuickButton $w={38} aria-label="Properties"><CheckPage w={14} /></QuickButton>
      <QuickButton $w={12} aria-label="New folder"><svg width="12" height="17" viewBox="0 0 12 17"><path d="M0 0H10V11H12V15H4V17L0 14Z" fill="#8b9495" /><path d="M0 0L4 2V17L0 14Z" fill="#a3a9aa" /></svg></QuickButton>
      <QuickButton $w={32} aria-label="Customize toolbar"><svg width="8" height="7" viewBox="0 0 8 7"><path d="M0 0H8V1.500H0ZM0 3H8L4 7Z" fill="#ffffff" /></svg></QuickButton>
      <TitleSep />
      <WindowTitle>This PC</WindowTitle>
      <CaptionButton aria-label="Minimize"><Line w={12} sw={1}><path d="M0 5.500H12" stroke="#000" /></Line></CaptionButton>
      <CaptionButton aria-label="Maximize"><Line w={12} sw={1}><path d="M.5.5H11.500V11.500H.5Z" stroke="#000" /></Line></CaptionButton>
      <CaptionButton aria-label="Close"><Cross s={13} /></CaptionButton>
    </TitleBar>
    <RibbonTabs>
      <RibbonTab $kind="file">File</RibbonTab>
      <RibbonTab $kind="on">Computer</RibbonTab>
      <RibbonTab $kind="off">View</RibbonTab>
      <Spacer />
      <QuickButton $w={32} aria-label="Collapse ribbon"><Chevron dir="up" w={16} sw={1.5} /></QuickButton>
      <QuickButton $w={22} aria-label="Help"><svg width="20" height="28" viewBox="0 0 20 28"><circle cx="10" cy="14" r="9.800" fill="#0b6dc8" /><text x="10" y="19" textAnchor="middle" fill="#fff" fontSize="14" fontWeight="700">?</text></svg></QuickButton>
    </RibbonTabs>
    <RibbonBar />
    <NavBar>
      <NavButton $w={40} aria-label="Back"><Line w={16} h={12} sw={2}><path d="M15 6H1M6 1L1 6L6 11" /></Line></NavButton>
      <NavButton $w={38} $dim aria-label="Forward"><Line w={16} h={12} sw={2}><path d="M1 6H15M10 1L15 6L10 11" /></Line></NavButton>
      <NavButton $w={22} aria-label="Recent locations"><Chevron dir="down" w={10} sw={2} /></NavButton>
      <NavButton $w={29} aria-label="Up"><Line w={12} h={16} sw={2}><path d="M6 15V1M1 6L6 1L11 6" /></Line></NavButton>
      <PathBox>
        <PcIcon />
        <NavButton $w={24} $dim aria-label="Show locations"><Chevron dir="right" w={10} sw={2} /></NavButton>
        <PathText>This PC</PathText>
        <NavButton $w={40} $dim aria-label="Previous locations"><Chevron dir="down" w={13} sw={2} /></NavButton>
        <NavButton $w={37} $dim aria-label="Refresh"><Line w={16} sw={2}><path d="M10.500 2.500A6.500 6.500 0 1 1 3.500 3.500M1 1.500H5.500V6" /></Line></NavButton>
      </PathBox>
      <SearchBox>
        <SearchInput type="search" aria-label="Search This PC" />
        <svg width="16" height="16" viewBox="0 0 16 16" fill="none" stroke="#a5a5a5" strokeWidth="2"><circle cx="10" cy="5.500" r="4" /><path d="M7 8.500L1 14.500" /></svg>
      </SearchBox>
    </NavBar>
    <Body>
      <Tree aria-label="Navigation pane">
        {rows.map((r, i) => (
          <TreeRow key={i} $root={r.root} $on={r.on} $end={r.end}>
            <TreeIcon>{r.icon}</TreeIcon>
            <TreeLabel>{r.label}</TreeLabel>
            {r.pin && <PinSlot><Pin /></PinSlot>}
          </TreeRow>
        ))}
      </Tree>
      <TreeScroll>
        <PlainButton aria-label="Scroll up"><Chevron dir="up" w={11} sw={1.8} /></PlainButton>
        <TreeThumb />
        <LastCell aria-label="Scroll down"><Chevron dir="down" w={11} sw={1.8} /></LastCell>
      </TreeScroll>
      <Content>
        <SectionHead><SectionButton><svg width="12" height="12" viewBox="0 0 12 12" fill="none" stroke="#6a6a6a"><path d="M1 3.500L6 8.500L11 3.500" /></svg>Folders (7)</SectionButton></SectionHead>
        <Tiles>
          {folders.map((f, i) => (
            <Tile key={f.label} $focus={i === 0}>
              <TileIcon><BigFolder kind={f.kind} /></TileIcon>
              <TileLabel>{f.label}</TileLabel>
            </Tile>
          ))}
        </Tiles>
        <SectionHead><SectionButton><svg width="12" height="12" viewBox="0 0 12 12" fill="none" stroke="#6a6a6a"><path d="M1 3.500L6 8.500L11 3.500" /></svg>Devices and drives (4)</SectionButton></SectionHead>
        <Tiles>
          {drives.map((d) => (
            <DriveTile key={d.label} $bare={d.total === undefined}>
              <DriveIconSlot $bare={d.total === undefined}><BigDrive win={d.win} /></DriveIconSlot>
              <DriveText>
                <span>{d.label}</span>
                {d.total !== undefined && (
                  <>
                    <Meter><MeterFill style={{ width: `${(1 - d.free! / d.total) * 100}%` }} /></Meter>
                    <DriveFree>{`${d.free} GB free of ${d.total} GB`}</DriveFree>
                  </>
                )}
              </DriveText>
            </DriveTile>
          ))}
        </Tiles>
      </Content>
    </Body>
    <StatusBar>
      <span>11 items</span>
      <StatusRule />
      <PlainButton aria-label="Details view"><DetailsIcon /></PlainButton>
      <PlainButton aria-label="Large icons view"><Small kind="photo" /></PlainButton>
    </StatusBar>
  </Explorer>
);

export default function App() {
  return (
    <>
      <GlobalStyle />
      <Browser>
        <SideNav />
        <BrowserMain>
          <BrowserTop />
          <Frame>
            <BrowserToolbar />
            <Page>
              <PageBody>
                <FieldLabel htmlFor="category">Category :</FieldLabel>
                <SelectBox>
                  <CategorySelect id="category" defaultValue="Windows">
                    <option>Windows</option>
                  </CategorySelect>
                  <SelectArrow><svg width="10" height="8" viewBox="0 0 10 8"><path d="M0 0H10L5 8Z" fill="#404040" /></svg></SelectArrow>
                </SelectBox>
              </PageBody>
              <PageScroll>
                <PlainButton aria-label="Scroll page up"><Chevron dir="up" w={9} sw={2.5} /></PlainButton>
                <PageThumb />
                <LastCell aria-label="Scroll page down"><Chevron dir="down" w={9} sw={2.5} /></LastCell>
              </PageScroll>
            </Page>
          </Frame>
        </BrowserMain>
        <ExplorerWindow />
      </Browser>
    </>
  );
}
